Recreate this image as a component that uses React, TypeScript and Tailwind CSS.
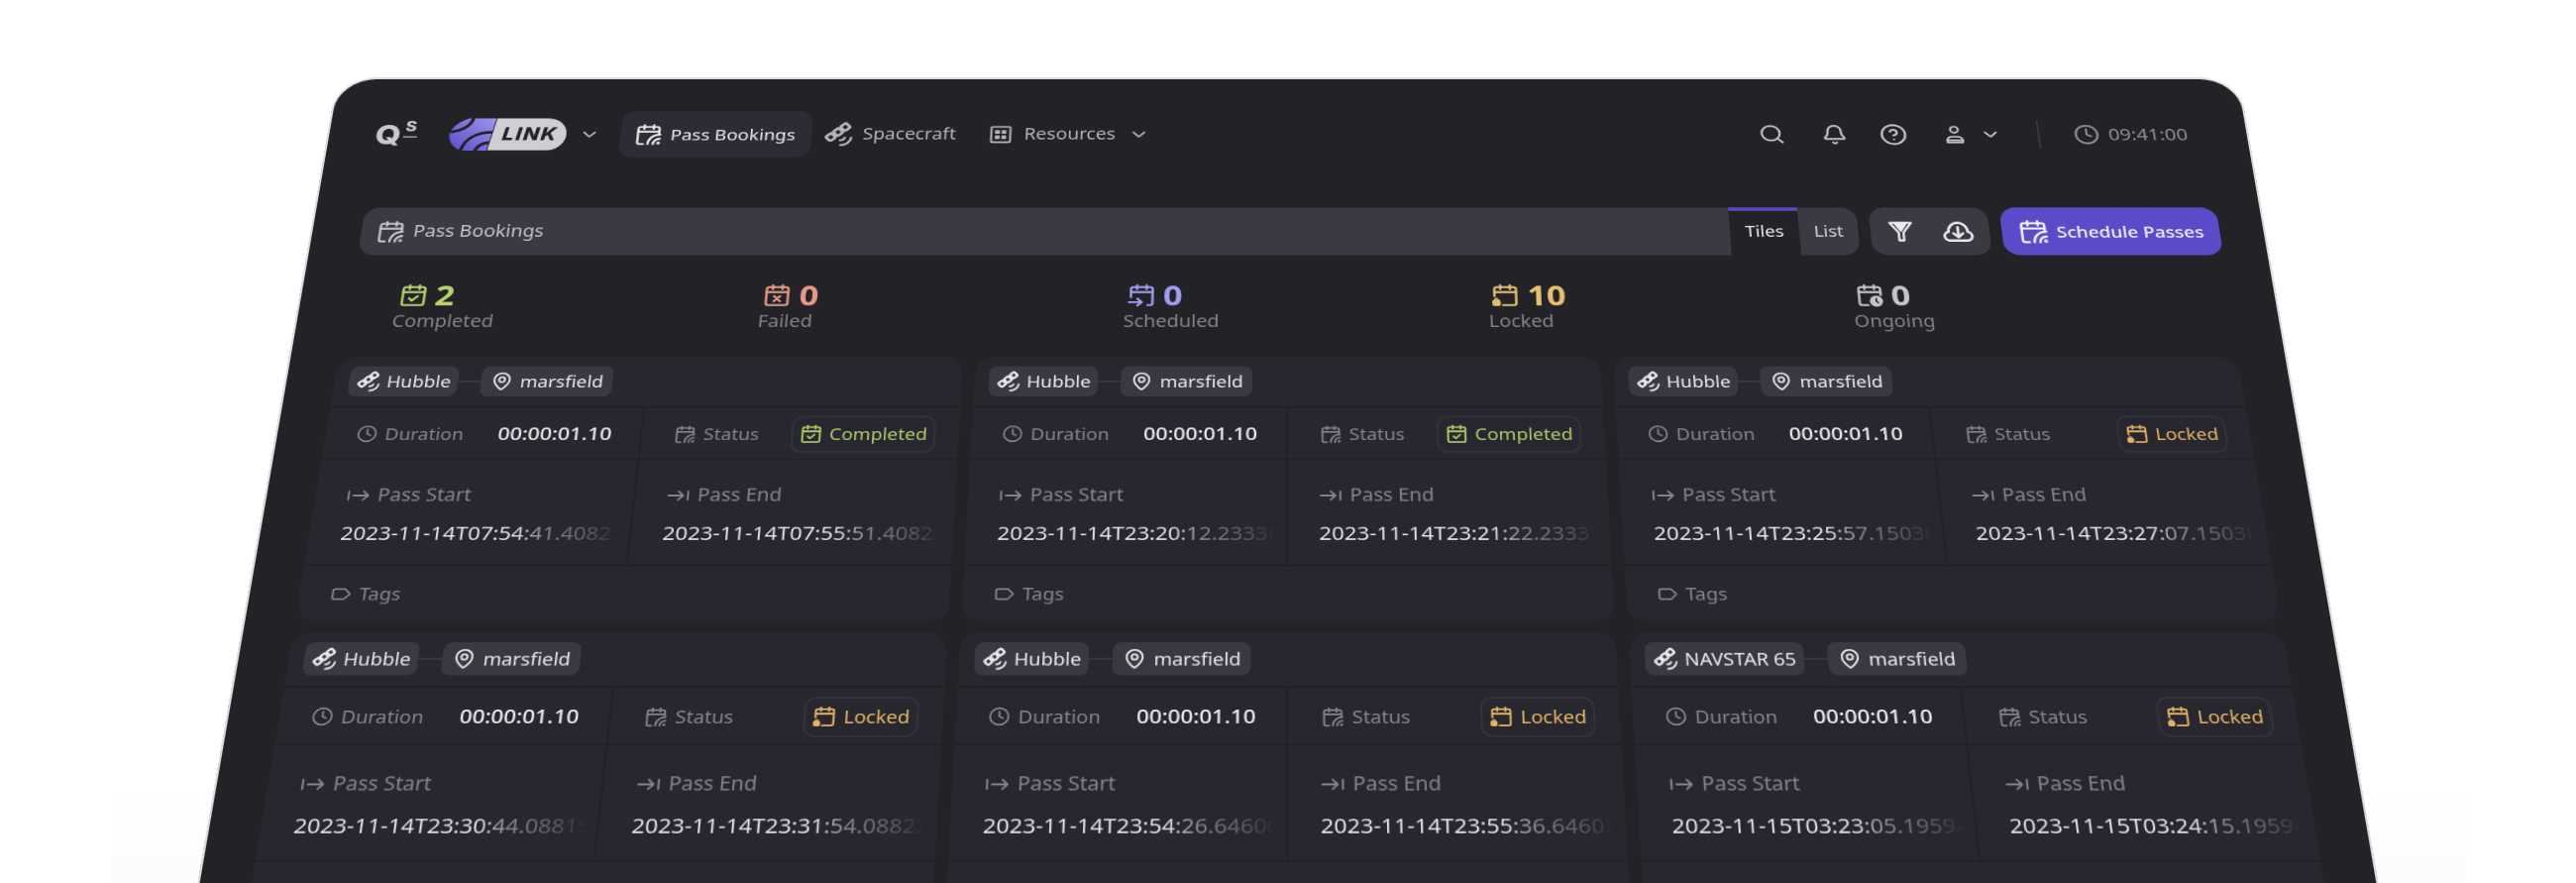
import type { ReactNode } from "react";
import { Bell, ChevronDown, CircleHelp, Clock, MapPin, Search } from "lucide-react";

const CARDS = [
  { sat: "Hubble", start: "2023-11-14T07:54:41.40823", end: "2023-11-14T07:55:51.40823", status: "Completed" },
  { sat: "Hubble", start: "2023-11-14T23:20:12.23336", end: "2023-11-14T23:21:22.23337", status: "Completed" },
  { sat: "Hubble", start: "2023-11-14T23:25:57.15036", end: "2023-11-14T23:27:07.15038", status: "Locked" },
  { sat: "Hubble", start: "2023-11-14T23:30:44.08819", end: "2023-11-14T23:31:54.08822", status: "Locked" },
  { sat: "Hubble", start: "2023-11-14T23:54:26.64600", end: "2023-11-14T23:55:36.64602", status: "Locked" },
  { sat: "NAVSTAR 65", start: "2023-11-15T03:23:05.19594", end: "2023-11-15T03:24:15.19594", status: "Locked" },
];

function Ico({ size = 24, children }: { size?: number; children: ReactNode }) {
  return (
    <svg width={size} height={size} viewBox="0 0 24 24" fill="none" stroke="currentColor" strokeWidth="2" strokeLinecap="round" strokeLinejoin="round" className="shrink-0">
      {children}
    </svg>
  );
}

const CalendarWifi = ({ size }: { size?: number }) => (
  <Ico size={size}>
    <path d="M8 22H5a2 2 0 0 1-2-2V6a2 2 0 0 1 2-2h14a2 2 0 0 1 2 2v6" />
    <path d="M3 9h18M8 2v4M16 2v4" />
    <path d="M12 22a10 10 0 0 1 10-10M16.5 22a5.5 5.5 0 0 1 5.5-5.5" />
    <circle cx="21" cy="21" r="0.6" />
  </Ico>
);

const CalendarCheck = ({ size }: { size?: number }) => (
  <Ico size={size}>
    <rect x="3" y="4" width="18" height="18" rx="2" />
    <path d="M3 9h18M8 2v4M16 2v4M8.5 15l2.5 2.5 4.5-4.5" />
  </Ico>
);

const CalendarX = ({ size }: { size?: number }) => (
  <Ico size={size}>
    <rect x="3" y="4" width="18" height="18" rx="2" />
    <path d="M3 9h18M8 2v4M16 2v4M9.5 13l5 5M14.5 13l-5 5" />
  </Ico>
);

const CalendarIn = ({ size }: { size?: number }) => (
  <Ico size={size}>
    <path d="M3 14V6a2 2 0 0 1 2-2h14a2 2 0 0 1 2 2v14a2 2 0 0 1-2 2h-2" />
    <path d="M3 9h18M8 2v4M16 2v4M1.5 19H12M8.5 15.5l3.5 3.5-3.5 3.5" />
  </Ico>
);

const CalendarLock = ({ size }: { size?: number }) => (
  <Ico size={size}>
    <path d="M3 13V6a2 2 0 0 1 2-2h14a2 2 0 0 1 2 2v14a2 2 0 0 1-2 2H10" />
    <path d="M3 9h18M8 2v4M16 2v4" />
    <rect x="2" y="17.5" width="5" height="4.5" rx="1" fill="currentColor" />
    <path d="M3.2 17.5v-1a1.3 1.3 0 0 1 2.6 0v1" strokeWidth="1.2" />
  </Ico>
);

const CalendarClock = ({ size }: { size?: number }) => (
  <Ico size={size}>
    <path d="M10 22H5a2 2 0 0 1-2-2V6a2 2 0 0 1 2-2h14a2 2 0 0 1 2 2v6" />
    <path d="M3 9h18M8 2v4M16 2v4" />
    <circle cx="17" cy="18" r="5.5" fill="currentColor" stroke="none" />
    <path d="M17 15.5V18l1.5 1.5" stroke="#232227" strokeWidth="1.5" />
  </Ico>
);

const Satellite = ({ size }: { size?: number }) => (
  <Ico size={size}>
    <g transform="rotate(-42 11 10)" strokeWidth="2.4">
      <rect x="1" y="7.2" width="5.6" height="5.6" rx="1.4" />
      <rect x="8.2" y="7.2" width="5.6" height="5.6" rx="1.4" />
      <rect x="15.4" y="7.2" width="5.6" height="5.6" rx="1.4" />
    </g>
    <path d="M13.5 22.5a8 8 0 0 0 8-7M13 17.8a3.5 3.5 0 0 0 3.5-2.3" strokeWidth="1.9" />
  </Ico>
);

const Resources = ({ size }: { size?: number }) => (
  <Ico size={size}>
    <rect x="2.5" y="2.5" width="19" height="19" rx="1.5" />
    <path d="M7 7h3.5v3.5H7zM13.5 7H17v3.5h-3.5zM7 13.5h3.5V17H7zM13.5 13.5H17V17h-3.5z" fill="currentColor" strokeWidth="1" />
  </Ico>
);

const User = ({ size }: { size?: number }) => (
  <Ico size={size}>
    <circle cx="12" cy="6.5" r="3.5" />
    <path d="M5 21v-2.5a4 4 0 0 1 4-4h6a4 4 0 0 1 4 4V21z" />
    <path d="M5 18.5h14" />
  </Ico>
);

const Funnel = ({ size }: { size?: number }) => (
  <Ico size={size}>
    <path d="M3 3h18l-7 10v8h-4v-8z" />
    <path d="M7 3h10l-5 8z" fill="currentColor" />
  </Ico>
);

const CloudDown = ({ size }: { size?: number }) => (
  <Ico size={size}>
    <path d="M8 20H6a4 4 0 0 1-1-7.9A7.5 7.5 0 0 1 12 4a7.5 7.5 0 0 1 7 8.1A4 4 0 0 1 18 20z" />
    <path d="M12 8v9M8.5 13.5 12 17l3.5-3.5" />
  </Ico>
);

const ArrowFromLine = () => (
  <Ico size={22}>
    <path d="M2 7v10M7 12h15M17 7l5 5-5 5" />
  </Ico>
);

const ArrowToLine = () => (
  <Ico size={22}>
    <path d="M22 7v10M2 12h15M12 7l5 5-5 5" />
  </Ico>
);

const TagIcon = () => (
  <Ico size={21}>
    <path d="M3 8a2 2 0 0 1 2-2h10.5l5.5 6-5.5 6H5a2 2 0 0 1-2-2z" />
  </Ico>
);

function QsLogo() {
  return (
    <div className="flex w-[42px] shrink-0 items-start font-['Inter',sans-serif] font-extrabold text-[#c9c8cd]">
      <span className="text-[33px] leading-[38px]">Q</span>
      <span className="ml-[2px] flex flex-col items-center text-[17px] leading-[18px]">
        S<span className="mt-[3px] h-[2px] w-[14px] bg-[#8f8e94]" />
      </span>
    </div>
  );
}

function LinkLogo() {
  return (
    <div className="flex h-[40px] w-[117px] shrink-0 items-stretch">
      <svg width="46" height="40" viewBox="0 0 46 40" className="shrink-0">
        <defs>
          <linearGradient id="lk" x1="0" y1="1" x2="1" y2="0">
            <stop offset="0" stopColor="#5a4cc9" />
            <stop offset="1" stopColor="#9d94ec" />
          </linearGradient>
        </defs>
        <path d="M18 0H45L39 40H14C5 36 0 28 0 20 1 11 8 4 18 0Z" fill="url(#lk)" />
        <g fill="none" stroke="#232227" strokeWidth="3.5">
          <path d="M1 17C12 15 20 10 22 0" />
          <path d="M13 42C15 26 26 17 44 17" />
          <path d="M27 42C29 34 34 30 42 30" />
        </g>
      </svg>
      <div className="-ml-[6px] flex flex-1 items-center justify-center rounded-r-[20px] bg-[#cfced3] [clip-path:polygon(6px_0,100%_0,100%_100%,0_100%)]">
        <span className="pl-[4px] font-['Inter',sans-serif] text-[21px] font-extrabold italic tracking-[1.5px] text-[#232227]">LINK</span>
      </div>
    </div>
  );
}

function StatusBadge({ status }: { status: string }) {
  const done = status === "Completed";
  return (
    <div className={`flex h-[41px] items-center gap-[6px] rounded-[11px] border-2 border-[#33323b] px-[6px] text-[18px] ${done ? "text-[#b0cb6a]" : "text-[#e3b566]"}`}>
      {done ? <CalendarCheck size={22} /> : <CalendarLock size={22} />}
      {status}
    </div>
  );
}

function PassCell({ icon, label, value }: { icon: ReactNode; label: string; value: string }) {
  return (
    <div className="flex flex-col justify-center gap-[16px] overflow-hidden pl-[29px] pt-[4px]">
      <div className="flex h-[24px] items-center gap-[7px] text-[19px] text-[#85848d]">
        {icon}
        {label}
      </div>
      <div className="w-[260px] overflow-hidden whitespace-nowrap bg-[linear-gradient(90deg,#ecebee_62%,#8c8b93_72%,#5a5961_90%,transparent_100%)] bg-clip-text text-[20.5px] leading-[24px] text-transparent">
        {value}
      </div>
    </div>
  );
}

function PassCard({ sat, start, end, status }: { sat: string; start: string; end: string; status: string }) {
  return (
    <div className="flex h-[290px] flex-col divide-y-2 divide-[#222126] overflow-hidden rounded-[20px] bg-[#28272f]">
      <div className="flex h-[58px] items-center pl-[14px] text-[18px] text-[#e8e7ea]">
        <div className="flex h-[34px] items-center gap-[5px] rounded-[8px] bg-[#3a3942] px-[7px]">
          <Satellite size={24} />
          {sat}
        </div>
        <div className="h-[2px] w-[22px] bg-[#3a3942]" />
        <div className="flex h-[34px] items-center gap-[6px] rounded-[8px] bg-[#3a3942] px-[9px]">
          <MapPin size={22} strokeWidth={2} />
          marsfield
        </div>
      </div>
      <div className="grid h-[58px] grid-cols-2 divide-x-2 divide-[#222126]">
        <div className="flex items-center pl-[29px] pt-[2px] text-[18px]">
          <div className="flex w-[134px] items-center gap-[7px] text-[#85848d]">
            <Clock size={20} />
            Duration
          </div>
          <span className="text-[20px] font-medium text-[#ecebee]">00:00:01.10</span>
        </div>
        <div className="flex items-center justify-between pl-[30px] pr-[22px] pt-[2px] text-[18px]">
          <div className="flex items-center gap-[7px] text-[#85848d]">
            <CalendarWifi size={21} />
            Status
          </div>
          <StatusBadge status={status} />
        </div>
      </div>
      <div className="grid h-[115px] grid-cols-2 divide-x-2 divide-[#222126]">
        <PassCell icon={<ArrowFromLine />} label="Pass Start" value={start} />
        <PassCell icon={<ArrowToLine />} label="Pass End" value={end} />
      </div>
      <div className="flex flex-1 items-center gap-[6px] pl-[28px] text-[18px] text-[#85848d]">
        <TagIcon />
        Tags
      </div>
    </div>
  );
}

const STATS = [
  { icon: <CalendarCheck size={28} />, n: "2", label: "Completed", color: "text-[#b7d46c]" },
  { icon: <CalendarX size={28} />, n: "0", label: "Failed", color: "text-[#e59b87]" },
  { icon: <CalendarIn size={28} />, n: "0", label: "Scheduled", color: "text-[#a29df0]" },
  { icon: <CalendarLock size={28} />, n: "10", label: "Locked", color: "text-[#e6c070]" },
  { icon: <CalendarClock size={28} />, n: "0", label: "Ongoing", color: "text-[#c6c5cc]" },
];

export default function App() {
  return (
    <div className="flex h-[891px] w-[2600px] justify-center overflow-hidden bg-white bg-[linear-gradient(180deg,#ffffff_90%,#fcfcfc_100%)] bg-[length:2377px_100%] bg-center bg-no-repeat pt-[80px] font-['Noto_Sans',sans-serif]">
      <div className="h-[900px] w-[1916px] shrink-0 origin-top rounded-t-[38px] bg-[#232227] px-[46px] pt-[40px] shadow-[0_0_0_2px_#dcdcde] [transform:perspective(4150px)_rotateX(36.87deg)]">
        {/* Top nav */}
        <nav className="flex h-[57px] items-center text-[18px] text-[#b4b3ba]">
          <QsLogo />
          <div className="ml-[32px]"><LinkLogo /></div>
          <ChevronDown size={22} className="ml-[12px] shrink-0" />
          <div className="ml-[20px] flex h-[57px] w-[191px] items-center gap-[8px] rounded-[14px] bg-[#2d2c34] pl-[14px] text-[18.5px] text-[#ecebee]">
            <CalendarWifi size={28} />
            Pass Bookings
          </div>
          <div className="ml-[12px] flex items-center gap-[8px] text-[19px]">
            <Satellite size={31} />
            Spacecraft
          </div>
          <div className="ml-[33px] flex items-center gap-[11px] text-[19px]">
            <Resources size={24} />
            Resources
            <ChevronDown size={22} className="ml-[1px]" />
          </div>
          <div className="ml-auto flex items-center pr-[13px] text-[#c4c3c9]">
            <Search size={27} />
            <Bell size={26} className="ml-[36px]" />
            <CircleHelp size={28} className="ml-[32px]" />
            <div className="ml-[34px]"><User size={26} /></div>
            <ChevronDown size={22} className="ml-[12px]" />
            <div className="ml-[36px] h-[34px] w-[2px] bg-[#38373f]" />
            <Clock size={26} className="ml-[34px] text-[#8f8e96]" />
            <span className="ml-[9px] text-[20px] text-[#8f8e96]">09:41:00</span>
          </div>
        </nav>

        {/* Toolbar */}
        <div className="-mr-[3px] ml-[2px] mt-[61px] flex h-[57px] gap-[12px]">
          <div className="flex flex-1 overflow-hidden rounded-[16px] bg-[#3b3a43]">
            <div className="flex flex-1 items-center gap-[8px] pl-[15px] text-[19px] text-[#c4c3c9]">
              <CalendarWifi size={28} />
              Pass Bookings
            </div>
            <div className="flex w-[68px] items-center justify-center border-t-4 border-[#5a4cc9] bg-[#232227] pb-[4px] text-[18px] text-[#ecebee]">Tiles</div>
            <div className="flex w-[58px] items-center justify-center text-[18px] text-[#d4d3d8]">List</div>
          </div>
          <div className="flex w-[117px] items-center justify-center gap-[26px] rounded-[16px] bg-[#3b3a43] text-[#ecebee]">
            <Funnel size={28} />
            <CloudDown size={32} />
          </div>
          <div className="flex w-[214px] items-center justify-center gap-[8px] rounded-[16px] bg-[#5a4cc9] text-[18.5px] font-medium text-[#f2f1f7]">
            <CalendarWifi size={30} />
            Schedule Passes
          </div>
        </div>

        {/* Stats */}
        <div className="mt-[30px] grid h-[88px] grid-cols-5 pl-[46px] pr-[11px]">
          {STATS.map((s) => (
            <div key={s.label}>
              <div className={`ml-[3px] flex h-[34px] items-center gap-[7px] text-[33px] font-bold ${s.color}`}>
                {s.icon}
                {s.n}
              </div>
              <div className="text-[19px] leading-[26px] text-[#85848d]">{s.label}</div>
            </div>
          ))}
        </div>

        {/* Cards */}
        <div className="grid grid-cols-3 gap-x-[12px] gap-y-[10px]">
          {CARDS.map((c) => (
            <PassCard key={c.start} {...c} />
          ))}
        </div>
      </div>
    </div>
  );
}
